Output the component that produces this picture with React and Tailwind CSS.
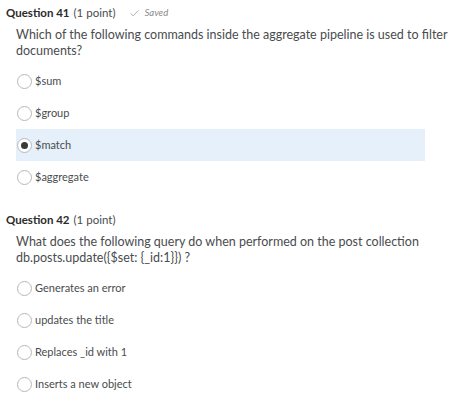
import { Check } from "lucide-react";

const questions = [
  {
    num: 41,
    saved: true,
    text: ["Which of the following commands inside the aggregate pipeline is used to filter", "documents?"],
    options: ["$sum", "$group", "$match", "$aggregate"],
    selected: 2,
  },
  {
    num: 42,
    saved: false,
    text: ["What does the following query do when performed on the post collection", "db.posts.update({$set: {_id:1}}) ?"],
    options: ["Generates an error", "updates the title", "Replaces _id with 1", "Inserts a new object"],
    selected: -1,
  },
];

function Radio({ checked }) {
  return (
    <span className="flex h-[15px] w-[15px] shrink-0 items-center justify-center rounded-full border border-[#b8b8b8] bg-white">
      {checked && <span className="h-[7px] w-[7px] rounded-full bg-[#3a3a3a]" />}
    </span>
  );
}

function Question({ q, className }) {
  return (
    <div className={className}>
      <div className="flex h-5 items-center pl-[6px] text-[11.5px] text-[#2b2b2b]">
        <span className="font-bold">Question {q.num}</span>
        <span className="ml-1 text-[#494c4e]">(1 point)</span>
        {q.saved && (
          <span className="ml-[14px] flex items-center gap-[4px] text-[9.5px] italic text-[#8a8a8a]">
            <Check size={11} strokeWidth={1.5} />
            Saved
          </span>
        )}
      </div>
      <div className="mt-[4px] pl-4 text-[12.5px] leading-4 text-[#494c4e]">
        {q.text.map((t) => (
          <div key={t}>{t}</div>
        ))}
      </div>
      <div className="mt-[6px] pl-4">
        {q.options.map((o, i) => (
          <div
            key={o}
            className={`flex h-8 w-[409px] items-center gap-[3px] pl-[1px] text-[11px] text-[#494c4e] ${
              i === q.selected ? "bg-[#e6f0fb]" : ""
            }`}
          >
            <Radio checked={i === q.selected} />
            <span>{o}</span>
          </div>
        ))}
      </div>
    </div>
  );
}

export default function App() {
  return (
    <div className="h-[404px] w-[474px] bg-white pt-[3px]" style={{ fontFamily: "Lato, 'Noto Sans', sans-serif" }}>
      <Question q={questions[0]} />
      <Question q={questions[1]} className="mt-[17px]" />
    </div>
  );
}
